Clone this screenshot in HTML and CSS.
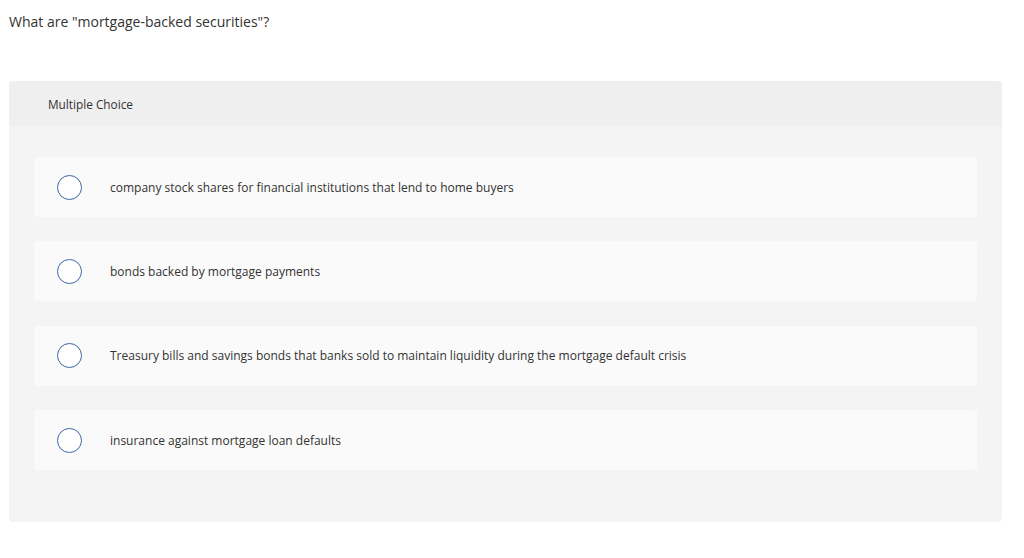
FILE: index.html
```html
<!DOCTYPE html>
<html lang="en">
<head>
    <meta charset="UTF-8">
    <title>Multiple Choice</title>
    <link rel="stylesheet" href="styles.css">
</head>
<body>
    <div class="question">What are "mortgage-backed securities"?</div>

    <div class="panel">
        <div class="panel-header">Multiple Choice</div>
        <div class="choices">
            <label class="choice">
                <span class="radio"></span>
                <span class="choice-text">company stock shares for financial institutions that lend to home buyers</span>
            </label>
            <label class="choice">
                <span class="radio"></span>
                <span class="choice-text">bonds backed by mortgage payments</span>
            </label>
            <label class="choice">
                <span class="radio"></span>
                <span class="choice-text">Treasury bills and savings bonds that banks sold to maintain liquidity during the mortgage default crisis</span>
            </label>
            <label class="choice">
                <span class="radio"></span>
                <span class="choice-text">insurance against mortgage loan defaults</span>
            </label>
        </div>
    </div>
</body>
</html>
```

FILE: styles.css
```css
body {
    font-family: 'Open Sans', 'Liberation Sans', sans-serif;
    margin: 0;
    padding: 0 22px 0 9px;
    background-color: #fff;
    color: #333;
}

.question {
    font-size: 14px;
    padding-top: 12px;
    height: 81px;
    box-sizing: border-box;
}

.panel {
    background-color: #f4f4f4;
    border-radius: 4px;
    padding-bottom: 52px;
}

.panel-header {
    background-color: #efefef;
    border-radius: 4px 4px 0 0;
    height: 45px;
    padding-left: 39px;
    font-size: 11.8px;
    display: flex;
    align-items: center;
}

.choices {
    display: flex;
    flex-direction: column;
    gap: 24.4px;
    padding: 31px 25px 0 25px;
}

.choice {
    display: flex;
    align-items: center;
    height: 60px;
    background-color: #fafafa;
    border-radius: 4px;
    padding-left: 23px;
}

.radio {
    width: 23px;
    height: 23px;
    border: 1px solid #3f67a3;
    border-radius: 50%;
    background-color: #fff;
    flex-shrink: 0;
}

.choice-text {
    margin-left: 28px;
    font-size: 12px;
}
```
